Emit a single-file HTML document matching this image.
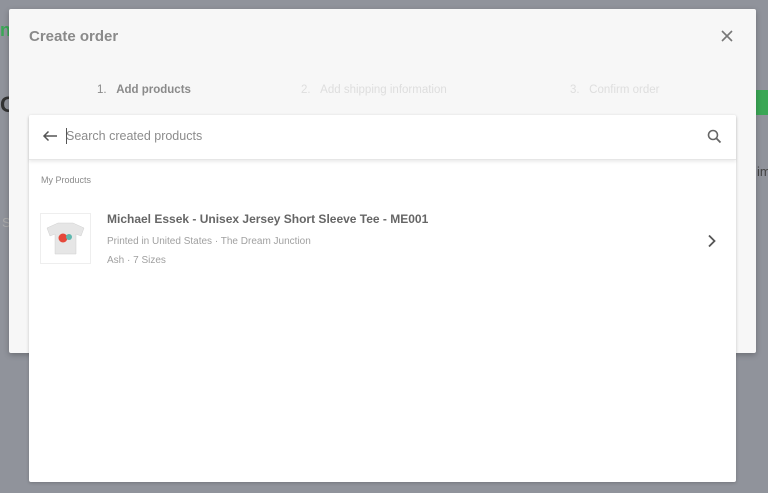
<!DOCTYPE html>
<html><head><meta charset="utf-8"><style>
*{margin:0;padding:0;box-sizing:border-box}
body{width:768px;height:493px;overflow:hidden;background:#90939b;font-family:"Liberation Sans",Arial,sans-serif;position:relative}
.bg{position:absolute}
.modal{position:absolute;left:9px;top:9px;width:747px;height:344px;background:#f7f7f7;border-radius:2px;box-shadow:0 2px 6px rgba(0,0,0,.25)}
.title{position:absolute;left:29px;top:28px;font-size:15px;font-weight:bold;color:#8a8a8a}
.close{position:absolute;left:720px;top:29px}
.step{position:absolute;top:84px;font-size:11.5px;color:#dedede}
.panel{position:absolute;left:29px;top:115px;width:707px;height:367px;background:#fff;border-radius:2px;box-shadow:0 1px 3px rgba(0,0,0,.2)}
.search{position:absolute;left:0;top:0;width:707px;height:45px;border-bottom:1px solid #e6e6e6;box-shadow:0 2px 3px rgba(0,0,0,.08)}
.ph{position:absolute;left:37px;top:14px;font-size:12.5px;color:#8c8c8c}
.caret{position:absolute;left:37px;top:13px;width:1px;height:16px;background:#555}
</style></head><body>
<div class="bg" style="left:0;top:20px;color:#3aa755;font-weight:bold;font-size:18px">n</div>
<div class="bg" style="left:0;top:92px;color:#333;font-weight:bold;font-size:22px">O</div>
<div class="bg" style="left:756px;top:90px;width:12px;height:25px;background:#3aa755"></div>
<div class="bg" style="left:757px;top:164px;color:#444;font-size:13px">im</div>
<div class="bg" style="left:2px;top:215px;color:#aaa;font-size:13px">S</div>
<div class="modal"></div>
<div class="title">Create order</div>
<svg class="close" width="14" height="14" viewBox="0 0 14 14"><path d="M2 2L12 12M12 2L2 12" stroke="#777" stroke-width="1.6"/></svg>
<div class="step" style="left:97px;color:#8a8a8a"><span>1.</span>&nbsp;&nbsp;&nbsp;<b style="font-weight:bold">Add products</b></div>
<div class="step" style="left:301px">2.&nbsp;&nbsp;&nbsp;Add shipping information</div>
<div class="step" style="left:570px">3.&nbsp;&nbsp;&nbsp;Confirm order</div>
<div class="panel">
 <div class="search">
  <svg style="position:absolute;left:13px;top:15px" width="16" height="12" viewBox="0 0 16 12"><path d="M15 6H2M6.5 1.5L2 6l4.5 4.5" fill="none" stroke="#555" stroke-width="1.5"/></svg>
  <div class="caret"></div>
  <div class="ph">Search created products</div>
  <svg style="position:absolute;left:678px;top:14px" width="15" height="15" viewBox="0 0 15 15"><circle cx="6" cy="6" r="4.5" fill="none" stroke="#666" stroke-width="1.6"/><path d="M9.3 9.3L13.5 13.5" stroke="#666" stroke-width="1.8"/></svg>
 </div>
 <div style="position:absolute;left:12px;top:60px;font-size:9px;color:#8a8a8a">My Products</div>
 <div style="position:absolute;left:11px;top:98px;width:51px;height:51px;border:1px solid #eee;background:#fff">
  <svg width="49" height="49" viewBox="0 0 49 49"><path d="M6 14l11-5h15l11 5-3 8-5-2v20H14V20l-5 2z" fill="#e6e6e6" stroke="#d0d0d0" stroke-width=".5"/><circle cx="22" cy="24" r="4.5" fill="#e5483a"/><circle cx="28" cy="23" r="3" fill="#5fb8ae"/></svg>
 </div>
 <div style="position:absolute;left:78px;top:97px;font-size:12px;font-weight:bold;color:#666">Michael Essek - Unisex Jersey Short Sleeve Tee - ME001</div>
 <div style="position:absolute;left:78px;top:121px;font-size:10px;color:#a0a0a0">Printed in United States · The Dream Junction</div>
 <div style="position:absolute;left:78px;top:140px;font-size:10px;color:#a0a0a0">Ash · 7 Sizes</div>
 <svg style="position:absolute;left:678px;top:119px" width="10" height="14" viewBox="0 0 10 14"><path d="M2 1.5L7.5 7 2 12.5" fill="none" stroke="#555" stroke-width="1.8"/></svg>
</div>
</body></html>
